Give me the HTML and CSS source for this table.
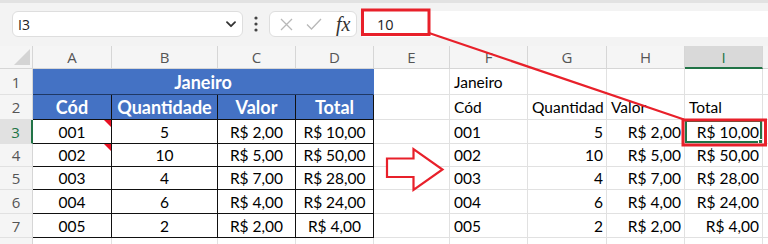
FILE: index.html
```html
<!DOCTYPE html>
<html lang="pt-BR">
<head>
<meta charset="utf-8">
<title>Planilha</title>
<link rel="stylesheet" href="styles.css">
</head>
<body>
<div class="app">
  <div class="formula-bar">
    <div class="namebox">
      <span>I3</span>
      <svg class="chev" width="10" height="7" viewBox="0 0 10 7"><path d="M1 1.2 L5 5.2 L9 1.2" fill="none" stroke="#333" stroke-width="1.8" stroke-linecap="round" stroke-linejoin="round"/></svg>
    </div>
    <div class="dots">
      <svg width="4" height="16" viewBox="0 0 4 16"><circle cx="2" cy="2" r="1.6" fill="#444"/><circle cx="2" cy="8" r="1.6" fill="#444"/><circle cx="2" cy="14" r="1.6" fill="#444"/></svg>
    </div>
    <div class="fx-buttons">
      <svg class="ico-x" width="13" height="13" viewBox="0 0 13 13"><path d="M1 1 L12 12 M12 1 L1 12" stroke="#b8b8b8" stroke-width="1.3" fill="none"/></svg>
      <svg class="ico-ok" width="16" height="12" viewBox="0 0 16 12"><path d="M1 6.5 L5.5 11 L15 1" stroke="#b8b8b8" stroke-width="1.3" fill="none"/></svg>
      <i class="fx">fx</i>
    </div>
    <div class="formula-input"><span>10</span></div>
  </div>

  <div class="sheet">
    <!-- column headers -->
    <div class="c corner"><svg width="16" height="16" viewBox="0 0 16 16"><polygon points="16,0 16,16 0,16" fill="#d4d4d4"/></svg></div>
    <div class="c ch">A</div>
    <div class="c ch">B</div>
    <div class="c ch">C</div>
    <div class="c ch">D</div>
    <div class="c ch">E</div>
    <div class="c ch">F</div>
    <div class="c ch">G</div>
    <div class="c ch">H</div>
    <div class="c ch sel">I</div>
    <div class="c ch"></div>

    <!-- row 1 -->
    <div class="c rh">1</div>
    <div class="c t-title">Janeiro</div>
    <div class="c"></div>
    <div class="c l">Janeiro</div>
    <div class="c"></div>
    <div class="c"></div>
    <div class="c"></div>
    <div class="c"></div>

    <!-- row 2 -->
    <div class="c rh">2</div>
    <div class="c t-head">Cód</div>
    <div class="c t-head">Quantidade</div>
    <div class="c t-head">Valor</div>
    <div class="c t-head">Total</div>
    <div class="c"></div>
    <div class="c l">Cód</div>
    <div class="c l">Quantidad</div>
    <div class="c l">Valor</div>
    <div class="c l">Total</div>
    <div class="c"></div>

    <!-- row 3 -->
    <div class="c rh sel">3</div>
    <div class="c t-cell note">001</div>
    <div class="c t-cell">5</div>
    <div class="c t-cell">R$ 2,00</div>
    <div class="c t-cell">R$ 10,00</div>
    <div class="c"></div>
    <div class="c l">001</div>
    <div class="c r">5</div>
    <div class="c r">R$ 2,00</div>
    <div class="c r active">R$ 10,00<span class="handle"></span></div>
    <div class="c"></div>

    <!-- row 4 -->
    <div class="c rh">4</div>
    <div class="c t-cell note">002</div>
    <div class="c t-cell">10</div>
    <div class="c t-cell">R$ 5,00</div>
    <div class="c t-cell">R$ 50,00</div>
    <div class="c"></div>
    <div class="c l">002</div>
    <div class="c r">10</div>
    <div class="c r">R$ 5,00</div>
    <div class="c r">R$ 50,00</div>
    <div class="c"></div>

    <!-- row 5 -->
    <div class="c rh">5</div>
    <div class="c t-cell">003</div>
    <div class="c t-cell">4</div>
    <div class="c t-cell">R$ 7,00</div>
    <div class="c t-cell">R$ 28,00</div>
    <div class="c"></div>
    <div class="c l">003</div>
    <div class="c r">4</div>
    <div class="c r">R$ 7,00</div>
    <div class="c r">R$ 28,00</div>
    <div class="c"></div>

    <!-- row 6 -->
    <div class="c rh">6</div>
    <div class="c t-cell">004</div>
    <div class="c t-cell">6</div>
    <div class="c t-cell">R$ 4,00</div>
    <div class="c t-cell">R$ 24,00</div>
    <div class="c"></div>
    <div class="c l">004</div>
    <div class="c r">6</div>
    <div class="c r">R$ 4,00</div>
    <div class="c r">R$ 24,00</div>
    <div class="c"></div>

    <!-- row 7 -->
    <div class="c rh">7</div>
    <div class="c t-cell">005</div>
    <div class="c t-cell">2</div>
    <div class="c t-cell">R$ 2,00</div>
    <div class="c t-cell">R$ 4,00</div>
    <div class="c"></div>
    <div class="c l">005</div>
    <div class="c r">2</div>
    <div class="c r">R$ 2,00</div>
    <div class="c r">R$ 4,00</div>
    <div class="c"></div>

    <!-- row 8 (partially visible) -->
    <div class="c rh"></div>
    <div class="c"></div>
    <div class="c"></div>
    <div class="c"></div>
    <div class="c"></div>
    <div class="c"></div>
    <div class="c"></div>
    <div class="c"></div>
    <div class="c"></div>
    <div class="c"></div>
    <div class="c"></div>
  </div>

  <svg class="overlay" width="768" height="244" viewBox="0 0 768 244">
    <rect x="362.5" y="10" width="66.5" height="24.5" fill="none" stroke="#e8202a" stroke-width="3"/>
    <line x1="429" y1="33" x2="684" y2="119.5" stroke="#e8202a" stroke-width="2.2"/>
    <rect x="683" y="120" width="82.5" height="25" fill="none" stroke="#e8202a" stroke-width="3"/>
    <polygon points="387,158.5 413.5,158.5 413.5,149 442.5,169.5 413.5,190 413.5,177 387,177" fill="#fff" stroke="#e8202a" stroke-width="2.2" stroke-linejoin="miter"/>
  </svg>
</div>
</body>
</html>
```

FILE: styles.css
```css
* {
  box-sizing: border-box;
}

body {
  margin: 0;
  background: #ffffff;
  font-family: Lato, "Liberation Sans", sans-serif;
}

.app {
  position: relative;
  width: 768px;
  height: 244px;
  overflow: hidden;
}

/* ---------- formula bar ---------- */
.formula-bar {
  display: flex;
  align-items: center;
  height: 46px;
  padding: 8px 0 9px 12px;
  background: #f3f3f3;
  border-top: 3px solid #e2e2e2;
}

.namebox {
  display: flex;
  align-items: center;
  justify-content: space-between;
  width: 231px;
  height: 26px;
  padding: 0 6px 0 5px;
  background: #ffffff;
  border: 1px solid #dedede;
  border-radius: 6px;
  font-family: "Open Sans", sans-serif;
  font-size: 14px;
  color: #222222;
}

.dots {
  display: flex;
  justify-content: center;
  align-items: center;
  width: 26px;
}

.fx-buttons {
  display: flex;
  align-items: center;
  width: 88px;
  height: 26px;
  padding-left: 10px;
  background: #ffffff;
  border: 1px solid #dedede;
  border-radius: 6px;
}

.ico-ok {
  margin-left: 13px;
}

.fx {
  margin-left: 14px;
  font-family: "Liberation Serif", serif;
  font-size: 20px;
  color: #333333;
  line-height: 1;
}

.formula-input {
  flex: 1;
  display: flex;
  align-items: center;
  height: 26px;
  margin-left: 5px;
  padding-left: 15px;
  background: #ffffff;
  font-family: "Open Sans", sans-serif;
  font-size: 14.5px;
  color: #222222;
}

/* ---------- sheet grid ---------- */
.sheet {
  display: grid;
  grid-template-columns: 33px 79px 106px 78px 78px 76px 78px 79px 78px 78px 1fr;
  grid-template-rows: 23px 26px 25px 24px 23px 23px 24px 24px 20px;
}

.c {
  display: flex;
  align-items: center;
  padding: 0 3px;
  overflow: hidden;
  white-space: nowrap;
  font-size: 15.5px;
  color: #000000;
  border-right: 1px solid #e1e1e1;
  border-bottom: 1px solid #e1e1e1;
}

.corner {
  align-items: flex-end;
  justify-content: flex-end;
  padding: 0 2px 3px 0;
  background: #f5f5f5;
  border-right-color: #d6d6d6;
  border-bottom-color: #d6d6d6;
}

.ch {
  justify-content: center;
  background: #f5f5f5;
  font-family: "Open Sans", sans-serif;
  font-size: 15px;
  color: #555555;
  border-right-color: #d6d6d6;
  border-bottom-color: #d6d6d6;
}

.ch.sel {
  background: #d9d9d9;
  color: #217346;
  border-bottom: 2px solid #217346;
}

.rh {
  justify-content: center;
  background: #f5f5f5;
  font-family: "Open Sans", sans-serif;
  font-size: 15px;
  color: #555555;
  border-right-color: #d6d6d6;
}

.rh.sel {
  background: #e1e1e1;
  color: #217346;
  border-right: 2px solid #217346;
}

/* left formatted table */
.t-title {
  grid-column: span 4;
  justify-content: center;
  background: #4472c4;
  color: #ffffff;
  font-weight: 700;
  font-size: 18px;
  border-right-color: #4472c4;
  border-bottom-color: #1f3864;
}

.t-head {
  justify-content: center;
  background: #4472c4;
  color: #ffffff;
  font-weight: 700;
  font-size: 18px;
  border-right-color: #111111;
  border-bottom-color: #111111;
}

.t-cell {
  justify-content: center;
  border-right-color: #111111;
  border-bottom-color: #111111;
}

.note {
  position: relative;
}

.note::after {
  content: "";
  position: absolute;
  top: 0;
  right: 0;
  border-top: 7px solid #e81123;
  border-left: 7px solid transparent;
}

/* right plain table */
.l {
  justify-content: flex-start;
  padding-left: 4px;
}

.r {
  justify-content: flex-end;
  padding-right: 3px;
}

.active {
  position: relative;
  box-shadow: inset 0 0 0 2px #217346;
}

.handle {
  position: absolute;
  right: -1px;
  bottom: -1px;
  width: 5px;
  height: 5px;
  background: #217346;
  border: 1px solid #ffffff;
}

/* annotations */
.overlay {
  position: absolute;
  top: 0;
  left: 0;
  pointer-events: none;
}
```
